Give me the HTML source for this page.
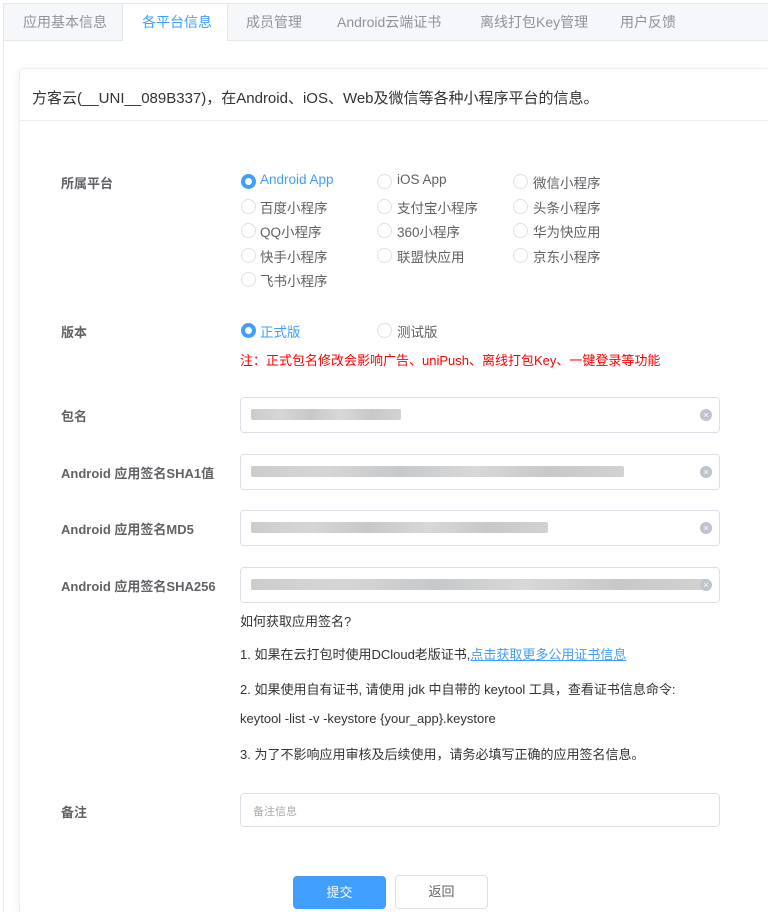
<!DOCTYPE html>
<html style="width:768px;height:912px;overflow:hidden"><head><meta charset="utf-8"><style>
*{box-sizing:border-box;margin:0;padding:0}
body{width:768px;height:912px;overflow:hidden;background:#fff;font-family:"Liberation Sans","Noto Sans CJK SC",sans-serif;color:#333;position:relative}
.a{position:absolute;white-space:nowrap}
.outer{position:absolute;left:3px;top:3px;width:765px;height:909px;border-left:1px solid #e4e7ed;border-top:1px solid #e4e7ed}
.tabs{position:absolute;left:4px;top:4px;width:764px;height:37px;background:#f5f7fa;border-bottom:1px solid #e4e7ed}
.tab{position:absolute;top:4px;height:37px;line-height:36px;font-size:14px;color:#909399}
.act{background:#fff;border-left:1px solid #e4e7ed;border-right:1px solid #e4e7ed;color:#409eff;height:37px;top:4px}
.card{position:absolute;left:19px;top:68px;width:749px;height:844px;background:#fff;border:1px solid #ebeef5;border-right:none;border-bottom:none;border-radius:4px 0 0 0;box-shadow:0 2px 10px rgba(0,0,0,.08)}
.lab{font-size:13px;font-weight:bold;color:#606266}
.r{position:absolute;width:15px;height:15px;border:1px solid #dcdfe6;border-radius:50%;background:#fff}
.r.on{border-color:#409eff;background:#409eff}
.r.on::after{content:"";position:absolute;left:3px;top:3px;width:7px;height:7px;border-radius:50%;background:#fff}
.rt{font-size:13.5px;color:#606266}
.inp{position:absolute;left:240px;width:480px;height:36px;border:1px solid #dcdfe6;border-radius:4px;background:#fff}
.x{position:absolute;right:7px;top:11px;width:12px;height:12px;border-radius:50%;background:#c0c4cc;color:#fff;font-size:9px;line-height:12px;text-align:center}
.blur{position:absolute;left:10px;top:11px;height:11px;background:linear-gradient(90deg,#ccc,#d6d6d6 20%,#c6c8ca 40%,#d8d8d8 60%,#c8c8c8 80%,#d2d2d2);border-radius:2px}
.h{font-size:13px;color:#333}
</style></head><body>
<div class="outer"></div>
<div class="tabs"></div>
<div class="tab" style="left:23px">应用基本信息</div>
<div class="tab act" style="left:122px;width:106px;padding-left:19px">各平台信息</div>
<div class="tab" style="left:246px">成员管理</div>
<div class="tab" style="left:337px">Android云端证书</div>
<div class="tab" style="left:480px">离线打包Key管理</div>
<div class="tab" style="left:620px">用户反馈</div>
<div class="card"></div>
<div class="a" style="left:32px;top:87px;font-size:15px;color:#333">方客云(__UNI__089B337)，在Android、iOS、Web及微信等各种小程序平台的信息。</div>
<div class="a" style="left:20px;top:120px;width:748px;height:1px;background:#ebeef5"></div>

<div class="a lab" style="left:61px;top:173px">所属平台</div>
<div class="r on" style="left:241px;top:174px"></div><div class="a rt" style="left:260px;top:172px;color:#409eff">Android App</div>
<div class="r" style="left:377px;top:174px"></div><div class="a rt" style="left:397px;top:172px">iOS App</div>
<div class="r" style="left:513px;top:174px"></div><div class="a rt" style="left:533px;top:172px">微信小程序</div>
<div class="r" style="left:241px;top:199px"></div><div class="a rt" style="left:260px;top:197px">百度小程序</div>
<div class="r" style="left:377px;top:199px"></div><div class="a rt" style="left:397px;top:197px">支付宝小程序</div>
<div class="r" style="left:513px;top:199px"></div><div class="a rt" style="left:533px;top:197px">头条小程序</div>
<div class="r" style="left:241px;top:223px"></div><div class="a rt" style="left:260px;top:221px">QQ小程序</div>
<div class="r" style="left:377px;top:223px"></div><div class="a rt" style="left:397px;top:221px">360小程序</div>
<div class="r" style="left:513px;top:223px"></div><div class="a rt" style="left:533px;top:221px">华为快应用</div>
<div class="r" style="left:241px;top:248px"></div><div class="a rt" style="left:260px;top:246px">快手小程序</div>
<div class="r" style="left:377px;top:248px"></div><div class="a rt" style="left:397px;top:246px">联盟快应用</div>
<div class="r" style="left:513px;top:248px"></div><div class="a rt" style="left:533px;top:246px">京东小程序</div>
<div class="r" style="left:241px;top:272px"></div><div class="a rt" style="left:260px;top:270px">飞书小程序</div>

<div class="a lab" style="left:61px;top:322px">版本</div>
<div class="r on" style="left:241px;top:323px"></div><div class="a rt" style="left:260px;top:321px;color:#409eff">正式版</div>
<div class="r" style="left:377px;top:323px"></div><div class="a rt" style="left:397px;top:321px">测试版</div>
<div class="a" style="left:240px;top:350px;font-size:13px;color:#f00">注：正式包名修改会影响广告、uniPush、离线打包Key、一键登录等功能</div>

<div class="a lab" style="left:61px;top:406px">包名</div>
<div class="inp" style="top:397px"><div class="blur" style="width:150px"></div><div class="x">×</div></div>
<div class="a lab" style="left:61px;top:463px">Android 应用签名SHA1值</div>
<div class="inp" style="top:454px"><div class="blur" style="width:373px"></div><div class="x">×</div></div>
<div class="a lab" style="left:61px;top:519px">Android 应用签名MD5</div>
<div class="inp" style="top:510px"><div class="blur" style="width:297px"></div><div class="x">×</div></div>
<div class="a lab" style="left:61px;top:576px">Android 应用签名SHA256</div>
<div class="inp" style="top:567px"><div class="blur" style="width:458px"></div><div class="x">×</div></div>

<div class="a h" style="left:240px;top:611px">如何获取应用签名?</div>
<div class="a h" style="left:240px;top:644px">1. 如果在云打包时使用DCloud老版证书,<span style="color:#409eff;text-decoration:underline">点击获取更多公用证书信息</span></div>
<div class="a h" style="left:240px;top:679px">2. 如果使用自有证书, 请使用 jdk 中自带的 keytool 工具，查看证书信息命令:</div>
<div class="a h" style="left:240px;top:711px">keytool -list -v -keystore {your_app}.keystore</div>
<div class="a h" style="left:240px;top:744px">3. 为了不影响应用审核及后续使用，请务必填写正确的应用签名信息。</div>

<div class="a lab" style="left:61px;top:802px">备注</div>
<div class="inp" style="top:793px;height:34px"><div class="a" style="left:12px;top:9px;font-size:11px;color:#aaa">备注信息</div></div>

<div class="a" style="left:293px;top:876px;width:93px;height:33px;background:#409eff;border-radius:4px;color:#fff;font-size:13px;text-align:center;line-height:33px">提交</div>
<div class="a" style="left:395px;top:875px;width:93px;height:34px;border:1px solid #dcdfe6;border-radius:4px;color:#606266;font-size:13px;text-align:center;line-height:32px">返回</div>
</body></html>
